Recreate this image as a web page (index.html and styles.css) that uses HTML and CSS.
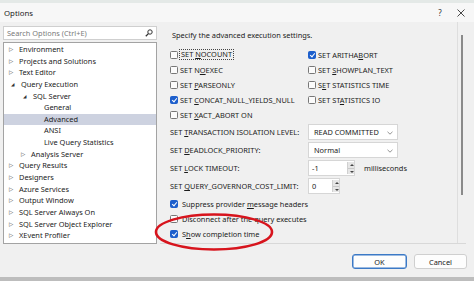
FILE: index.html
```html
<!DOCTYPE html>
<html>
<head>
    <title>Options</title>
    <link rel="stylesheet" href="styles.css">
</head>
<body>
<div class="dialog">
    <div class="top-strip"></div>

    <div class="titlebar">
        <span class="title">Options</span>
        <span class="title-btn">?</span>
        <span class="title-btn close">
            <svg width="8" height="8" viewBox="0 0 8 8"><path d="M0.5 0.5 L7.5 7.5 M7.5 0.5 L0.5 7.5" stroke="#333" stroke-width="0.9" fill="none"/></svg>
        </span>
    </div>

    <div class="content">
        <div class="nav">
            <div class="search">
                <span class="search-text">Search Options (Ctrl+E)</span>
                <svg class="search-icon" width="8" height="8" viewBox="0 0 8 8">
                    <circle cx="5" cy="3" r="2.2" stroke="#333" stroke-width="1" fill="none"/>
                    <path d="M3.4 4.6 L0.8 7.2" stroke="#333" stroke-width="1.3"/>
                </svg>
            </div>
            <ul class="tree">
                <li class="lvl0 closed">Environment</li>
                <li class="lvl0 closed">Projects and Solutions</li>
                <li class="lvl0 closed">Text Editor</li>
                <li class="lvl0 open">Query Execution</li>
                <li class="lvl1 open">SQL Server</li>
                <li class="lvl2">General</li>
                <li class="lvl2 selected">Advanced</li>
                <li class="lvl2">ANSI</li>
                <li class="lvl2">Live Query Statistics</li>
                <li class="lvl1 closed">Analysis Server</li>
                <li class="lvl0 closed">Query Results</li>
                <li class="lvl0 closed">Designers</li>
                <li class="lvl0 closed">Azure Services</li>
                <li class="lvl0 closed">Output Window</li>
                <li class="lvl0 closed">SQL Server Always On</li>
                <li class="lvl0 closed">SQL Server Object Explorer</li>
                <li class="lvl0 closed">XEvent Profiler</li>
            </ul>
        </div>

        <div class="settings">
            <div class="page">
                <p class="intro">Specify the advanced execution settings.</p>

                <div class="check-grid">
                    <div class="check"><span class="box"></span><span class="focus">SET <u>N</u>OCOUNT</span></div>
                    <div class="check"><span class="box on"></span><span>SET ARITHA<u>B</u>ORT</span></div>
                    <div class="check"><span class="box"></span><span>SET N<u>O</u>EXEC</span></div>
                    <div class="check"><span class="box"></span><span>SET <u>S</u>HOWPLAN_TEXT</span></div>
                    <div class="check"><span class="box"></span><span>SET <u>P</u>ARSEONLY</span></div>
                    <div class="check"><span class="box"></span><span>S<u>E</u>T STATISTICS TIME</span></div>
                    <div class="check"><span class="box on"></span><span>SET <u>C</u>ONCAT_NULL_YIELDS_NULL</span></div>
                    <div class="check"><span class="box"></span><span>SET ST<u>A</u>TISTICS IO</span></div>
                    <div class="check"><span class="box"></span><span>SET <u>X</u>ACT_ABORT ON</span></div>
                </div>

                <div class="field-grid">
                    <span class="field-label">SET <u>T</u>RANSACTION ISOLATION LEVEL:</span>
                    <div class="select wide">READ COMMITTED
                        <svg class="chev" width="6" height="4" viewBox="0 0 6 4"><path d="M0.5 0.8 L3 3.2 L5.5 0.8" stroke="#777" stroke-width="0.8" fill="none"/></svg>
                    </div>

                    <span class="field-label">SET <u>D</u>EADLOCK_PRIORITY:</span>
                    <div class="select wide">Normal
                        <svg class="chev" width="6" height="4" viewBox="0 0 6 4"><path d="M0.5 0.8 L3 3.2 L5.5 0.8" stroke="#777" stroke-width="0.8" fill="none"/></svg>
                    </div>

                    <span class="field-label">SET <u>L</u>OCK TIMEOUT:</span>
                    <div class="field-row">
                        <div class="spin lock">-1
                            <span class="spin-btns"><span class="up"></span><span class="down"></span></span>
                        </div>
                        <span class="unit">milliseconds</span>
                    </div>

                    <span class="field-label">SET <u>Q</u>UERY_GOVERNOR_COST_LIMIT:</span>
                    <div class="field-row">
                        <div class="spin cost">0
                            <span class="spin-btns"><span class="up"></span><span class="down"></span></span>
                        </div>
                    </div>
                </div>

                <div class="check-list">
                    <div class="check"><span class="box on"></span><span>Suppress provider <u>m</u>essage headers</span></div>
                    <div class="check"><span class="box"></span><span>Disconnect after the query executes</span></div>
                    <div class="check"><span class="box on"></span><span>S<u>h</u>ow completion time</span></div>
                </div>
            </div>
            <div class="scrollbar"><div class="thumb"></div></div>
        </div>
    </div>

    <div class="footer">
        <button class="btn default">OK</button>
        <button class="btn">Cancel</button>
    </div>
    <div class="bottom-strip"></div>

    <!-- red annotation round the last option -->
    <svg class="annotation" width="124" height="42" viewBox="0 0 124 42">
        <ellipse cx="61" cy="21" rx="58" ry="17.5" stroke="#d7141d" stroke-width="2.6" fill="none"/>
    </svg>
</div>
</body>
</html>
```

FILE: styles.css
```css
* {
    box-sizing: border-box;
}

body {
    margin: 0;
    font-family: "Noto Sans", "Open Sans", sans-serif;
    font-size: 7.4px;
    color: #1b1b1b;
    background: #f0f0f0;
}

.dialog {
    position: relative;
    width: 474px;
    height: 281px;
    overflow: hidden;
    display: flex;
    flex-direction: column;
}

.top-strip {
    height: 3px;
    background: #e4e9e7;
}

/* Title bar */
.titlebar {
    height: 19px;
    display: flex;
    align-items: center;
    padding-left: 4px;
    background: #f7f7f7;
}
.title {
    flex: 1;
    font-size: 7.8px;
}
.title-btn {
    width: 16px;
    text-align: center;
    font-size: 8px;
    color: #333;
}
.title-btn.close {
    width: 26px;
    display: flex;
    justify-content: center;
}

/* Main area */
.content {
    height: 222px;
    display: flex;
    padding-left: 3px;
}

.nav {
    width: 154px;
    display: flex;
    flex-direction: column;
}

.search {
    margin-top: 4px;
    height: 14px;
    display: flex;
    align-items: center;
    padding: 0 3px 0 3px;
    background: #fff;
    border: 1px solid #cfcfcf;
}
.search-text {
    flex: 1;
    color: #7a7a7a;
}

.tree {
    list-style: none;
    margin: 2px 0 0;
    padding: 1px 0 0;
    height: 202px;
    background: #fff;
    border: 1px solid #a3a3a3;
}
.tree li {
    height: 11.65px;
    line-height: 11.65px;
    white-space: nowrap;
}
.tree li::before {
    display: inline-block;
    width: 10px;
    font-family: "DejaVu Sans", sans-serif;
    font-size: 5.5px;
    color: #444;
    vertical-align: top;
}
.tree li.closed::before {
    content: "\25B7";
}
.tree li.open::before {
    content: "\25E2";
    font-size: 4.5px;
    padding-left: 2px;
    color: #333;
}
.tree li.lvl2::before {
    content: "";
}
.lvl0 { padding-left: 5px; }
.lvl1 { padding-left: 17px; }
.lvl2 { padding-left: 30px; }
.tree li.selected {
    background: #cdd2e0;
}

/* Settings page */
.settings {
    flex: 1;
    display: flex;
    margin-left: 3px;
    margin-right: 8px;
    border-bottom: 1px solid #d8d8d8;
}

.page {
    flex: 1;
    padding: 8px 0 0 10px;
}

.intro {
    margin: 0 0 0 2px;
    height: 10px;
    line-height: 10px;
}

.check {
    display: flex;
    align-items: center;
    white-space: nowrap;
}

.box {
    position: relative;
    width: 8px;
    height: 8px;
    margin-right: 2px;
    border: 1px solid #777;
    border-radius: 1.5px;
    background: #fbfbfb;
    flex-shrink: 0;
}
.box.on {
    background: #1d5fcc;
    border-color: #1d5fcc;
}
.box.on::after {
    content: "";
    position: absolute;
    left: 2.2px;
    top: 0.6px;
    width: 2px;
    height: 4px;
    border: solid #fff;
    border-width: 0 1px 1px 0;
    transform: rotate(40deg);
}

.focus {
    outline: 1px dotted #444;
    padding: 0 1px;
    line-height: 9px;
}

.check-grid {
    margin-top: 7px;
    display: grid;
    grid-template-columns: 138px 1fr;
    grid-auto-rows: 15px;
}

.field-grid {
    margin-top: 2px;
    display: grid;
    grid-template-columns: 138px 1fr;
    grid-auto-rows: 16px;
    row-gap: 2px;
    align-items: center;
}

.field-label {
    white-space: nowrap;
}

.field-row {
    display: flex;
    align-items: center;
}

.select {
    position: relative;
    height: 16px;
    display: flex;
    align-items: center;
    padding-left: 5px;
    background: #fff;
    border: 1px solid #d6d6d6;
}
.select.wide {
    width: 90px;
}
.chev {
    position: absolute;
    right: 4px;
    top: 6px;
}

.spin {
    position: relative;
    height: 16px;
    display: flex;
    align-items: center;
    padding-left: 3px;
    background: #fff;
    border: 1px solid #d6d6d6;
}
.spin.lock {
    width: 47px;
}
.spin.cost {
    width: 32px;
}
.spin-btns {
    position: absolute;
    right: 0;
    top: 1px;
    bottom: 1px;
    width: 7px;
    display: flex;
    flex-direction: column;
    border-left: 1px solid #d0d0d0;
}
.spin-btns span {
    flex: 1;
    position: relative;
    background: #e6e6e6;
}
.spin-btns .up {
    border-bottom: 1px solid #c8c8c8;
}
.spin-btns span::after {
    content: "";
    position: absolute;
    left: 1.5px;
    border-left: 2px solid transparent;
    border-right: 2px solid transparent;
}
.spin-btns .up::after {
    top: 2px;
    border-bottom: 2px solid #444;
}
.spin-btns .down::after {
    top: 2px;
    border-top: 2px solid #444;
}

.unit {
    margin-left: 9px;
}

.check-list {
    margin-top: 2px;
    display: grid;
    grid-auto-rows: 15px;
}
.check-list .box {
    margin-right: 4px;
}

.scrollbar {
    width: 9px;
    border-left: 1px solid #dedede;
}
.thumb {
    margin: 13px 0 0 3px;
    width: 2px;
    height: 160px;
    background: #8a8a8a;
}

/* Buttons */
.footer {
    height: 33px;
    display: flex;
    justify-content: flex-end;
    align-items: flex-start;
    gap: 7px;
    padding: 10px 7px 0 0;
}

.btn {
    width: 53px;
    height: 15px;
    padding: 0;
    font-family: "Noto Sans", "Open Sans", sans-serif;
    font-size: 7.4px;
    color: #1b1b1b;
    background: #fdfdfd;
    border: 1px solid #cfcfcf;
    border-radius: 3px;
}
.btn.default {
    width: 55px;
    border-color: #3b79c6;
    box-shadow: inset 0 0 0 0.5px #3b79c6;
}

.bottom-strip {
    height: 4px;
    background: #bdbdbd;
}

.annotation {
    position: absolute;
    left: 153px;
    top: 211px;
}
```
